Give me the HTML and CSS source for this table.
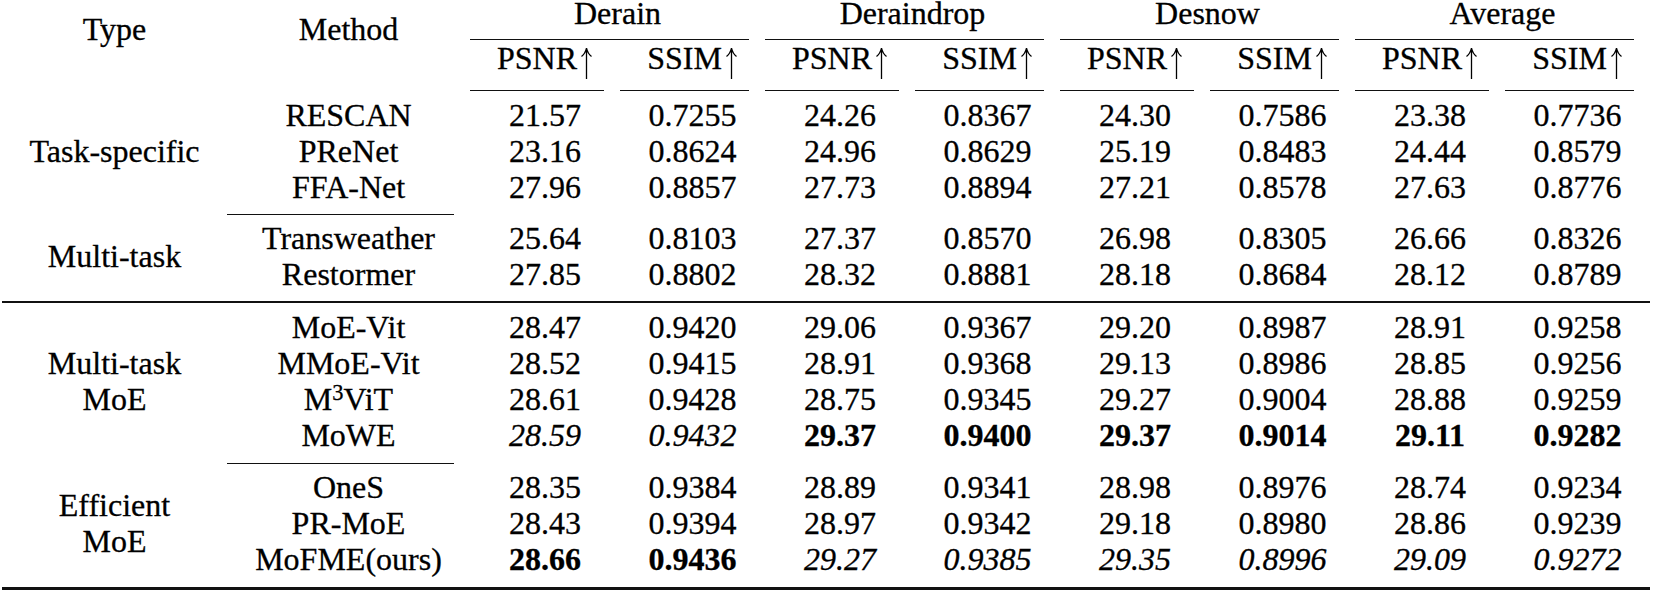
FILE: index.html
```html
<!DOCTYPE html>
<html lang="en">
<head>
<meta charset="utf-8">
<title>Results table</title>
<link rel="stylesheet" href="styles.css">
</head>
<body>
<table class="results">
  <colgroup>
    <col class="c-type"><col class="c-method">
    <col class="c-psnr"><col class="c-ssim">
    <col class="c-psnr"><col class="c-ssim">
    <col class="c-psnr"><col class="c-ssim">
    <col class="c-psnr"><col class="c-ssim">
  </colgroup>
  <thead>
    <tr class="r-group">
      <th rowspan="4" class="stub">Type</th>
      <th rowspan="4" class="stub">Method</th>
      <th colspan="2">Derain</th>
      <th colspan="2">Deraindrop</th>
      <th colspan="2">Desnow</th>
      <th colspan="2">Average</th>
    </tr>
    <tr class="rule r-top">
      <td colspan="2"><div class="cmid"></div></td>
      <td colspan="2"><div class="cmid"></div></td>
      <td colspan="2"><div class="cmid"></div></td>
      <td colspan="2"><div class="cmid"></div></td>
    </tr>
    <tr class="r-metric">
      <th>PSNR<svg class="arr" viewBox="0 0 13 22" width="13" height="22" aria-hidden="true"><path d="M6.5 1.5V32M1.5 9.5C3.8 7.8 5.6 5.2 6.5 1.2C7.4 5.2 9.2 7.8 11.5 9.5"/></svg></th>
      <th>SSIM<svg class="arr" viewBox="0 0 13 22" width="13" height="22" aria-hidden="true"><path d="M6.5 1.5V32M1.5 9.5C3.8 7.8 5.6 5.2 6.5 1.2C7.4 5.2 9.2 7.8 11.5 9.5"/></svg></th>
      <th>PSNR<svg class="arr" viewBox="0 0 13 22" width="13" height="22" aria-hidden="true"><path d="M6.5 1.5V32M1.5 9.5C3.8 7.8 5.6 5.2 6.5 1.2C7.4 5.2 9.2 7.8 11.5 9.5"/></svg></th>
      <th>SSIM<svg class="arr" viewBox="0 0 13 22" width="13" height="22" aria-hidden="true"><path d="M6.5 1.5V32M1.5 9.5C3.8 7.8 5.6 5.2 6.5 1.2C7.4 5.2 9.2 7.8 11.5 9.5"/></svg></th>
      <th>PSNR<svg class="arr" viewBox="0 0 13 22" width="13" height="22" aria-hidden="true"><path d="M6.5 1.5V32M1.5 9.5C3.8 7.8 5.6 5.2 6.5 1.2C7.4 5.2 9.2 7.8 11.5 9.5"/></svg></th>
      <th>SSIM<svg class="arr" viewBox="0 0 13 22" width="13" height="22" aria-hidden="true"><path d="M6.5 1.5V32M1.5 9.5C3.8 7.8 5.6 5.2 6.5 1.2C7.4 5.2 9.2 7.8 11.5 9.5"/></svg></th>
      <th>PSNR<svg class="arr" viewBox="0 0 13 22" width="13" height="22" aria-hidden="true"><path d="M6.5 1.5V32M1.5 9.5C3.8 7.8 5.6 5.2 6.5 1.2C7.4 5.2 9.2 7.8 11.5 9.5"/></svg></th>
      <th>SSIM<svg class="arr" viewBox="0 0 13 22" width="13" height="22" aria-hidden="true"><path d="M6.5 1.5V32M1.5 9.5C3.8 7.8 5.6 5.2 6.5 1.2C7.4 5.2 9.2 7.8 11.5 9.5"/></svg></th>
    </tr>
    <tr class="rule r-head">
      <td><div class="cmid"></div></td><td><div class="cmid"></div></td>
      <td><div class="cmid"></div></td><td><div class="cmid"></div></td>
      <td><div class="cmid"></div></td><td><div class="cmid"></div></td>
      <td><div class="cmid"></div></td><td><div class="cmid"></div></td>
    </tr>
  </thead>
  <tbody>
    <tr><td rowspan="3" class="type">Task-specific</td><td>RESCAN</td><td>21.57</td><td>0.7255</td><td>24.26</td><td>0.8367</td><td>24.30</td><td>0.7586</td><td>23.38</td><td>0.7736</td></tr>
    <tr><td>PReNet</td><td>23.16</td><td>0.8624</td><td>24.96</td><td>0.8629</td><td>25.19</td><td>0.8483</td><td>24.44</td><td>0.8579</td></tr>
    <tr><td>FFA-Net</td><td>27.96</td><td>0.8857</td><td>27.73</td><td>0.8894</td><td>27.21</td><td>0.8578</td><td>27.63</td><td>0.8776</td></tr>
    <tr class="rule r-sub"><td></td><td><div class="cmid"></div></td><td colspan="8"></td></tr>
    <tr><td rowspan="2" class="type">Multi-task</td><td>Transweather</td><td>25.64</td><td>0.8103</td><td>27.37</td><td>0.8570</td><td>26.98</td><td>0.8305</td><td>26.66</td><td>0.8326</td></tr>
    <tr><td>Restormer</td><td>27.85</td><td>0.8802</td><td>28.32</td><td>0.8881</td><td>28.18</td><td>0.8684</td><td>28.12</td><td>0.8789</td></tr>
    <tr class="rule r-mid"><td colspan="10"><div class="midrule"></div></td></tr>
    <tr><td rowspan="4" class="type">Multi-task<br>MoE</td><td>MoE-Vit</td><td>28.47</td><td>0.9420</td><td>29.06</td><td>0.9367</td><td>29.20</td><td>0.8987</td><td>28.91</td><td>0.9258</td></tr>
    <tr><td>MMoE-Vit</td><td>28.52</td><td>0.9415</td><td>28.91</td><td>0.9368</td><td>29.13</td><td>0.8986</td><td>28.85</td><td>0.9256</td></tr>
    <tr><td>M<sup>3</sup>ViT</td><td>28.61</td><td>0.9428</td><td>28.75</td><td>0.9345</td><td>29.27</td><td>0.9004</td><td>28.88</td><td>0.9259</td></tr>
    <tr><td>MoWE</td><td><em>28.59</em></td><td><em>0.9432</em></td><td><strong>29.37</strong></td><td><strong>0.9400</strong></td><td><strong>29.37</strong></td><td><strong>0.9014</strong></td><td><strong>29.11</strong></td><td><strong>0.9282</strong></td></tr>
    <tr class="rule r-sub2"><td></td><td><div class="cmid"></div></td><td colspan="8"></td></tr>
    <tr><td rowspan="3" class="type">Efficient<br>MoE</td><td>OneS</td><td>28.35</td><td>0.9384</td><td>28.89</td><td>0.9341</td><td>28.98</td><td>0.8976</td><td>28.74</td><td>0.9234</td></tr>
    <tr><td>PR-MoE</td><td>28.43</td><td>0.9394</td><td>28.97</td><td>0.9342</td><td>29.18</td><td>0.8980</td><td>28.86</td><td>0.9239</td></tr>
    <tr><td>MoFME(ours)</td><td><strong>28.66</strong></td><td><strong>0.9436</strong></td><td><em>29.27</em></td><td><em>0.9385</em></td><td><em>29.35</em></td><td><em>0.8996</em></td><td><em>29.09</em></td><td><em>0.9272</em></td></tr>
    <tr class="rule r-bottom"><td colspan="10"><div class="bottomrule"></div></td></tr>
  </tbody>
</table>
</body>
</html>
```
FILE: styles.css
```css
html, body {
  margin: 0;
  padding: 0;
  background: #ffffff;
}

body {
  font-family: "Liberation Serif", "Times New Roman", Times, serif;
  color: #000000;
}

.results {
  border-collapse: collapse;
  table-layout: fixed;
  width: 1648px;
  margin-left: 2px;
  font-family: "Liberation Serif", "Times New Roman", Times, serif;
  font-size: 32px;
  -webkit-text-stroke: 0.3px #000000;
}

.results col.c-type { width: 225px; }
.results col.c-method { width: 243px; }
.results col.c-psnr { width: 150px; }
.results col.c-ssim { width: 145px; }

.results th,
.results td {
  padding: 0;
  text-align: center;
  white-space: nowrap;
  font-weight: normal;
  line-height: 36px;
  vertical-align: middle;
}

.results .r-group th {
  line-height: 26px;
  height: 26px;
}

.results th.stub {
  vertical-align: top;
  padding-top: 11px;
  line-height: 36px;
}

.results .r-metric th {
  height: 36px;
}

.arr {
  display: inline-block;
  width: 13px;
  height: 22px;
  margin-left: 3px;
  vertical-align: baseline;
  overflow: visible;
}

.arr path {
  fill: none;
  stroke: #000000;
  stroke-width: 1.3;
}

.results sup {
  font-size: 0.7em;
  line-height: 0;
  vertical-align: 0.45em;
}

.results em { font-style: italic; }
.results strong { font-weight: bold; }

/* rule rows */
.results tr.rule td {
  line-height: 0;
  font-size: 0;
  height: auto;
}

.cmid {
  height: 1px;
  background: #111111;
  margin-right: 16px;
}

.midrule {
  height: 2px;
  background: #111111;
}

.bottomrule {
  height: 3px;
  background: #111111;
}

.r-top .cmid { margin-top: 13px; }
.r-head .cmid { margin-top: 14px; margin-bottom: 6px; }
.r-sub .cmid { margin-top: 9px; margin-bottom: 5px; }
.r-mid .midrule { margin-top: 9px; margin-bottom: 6px; }
.r-sub2 .cmid { margin-top: 10px; margin-bottom: 5px; }
.r-bottom .bottomrule { margin-top: 10px; margin-bottom: 1px; }
```
